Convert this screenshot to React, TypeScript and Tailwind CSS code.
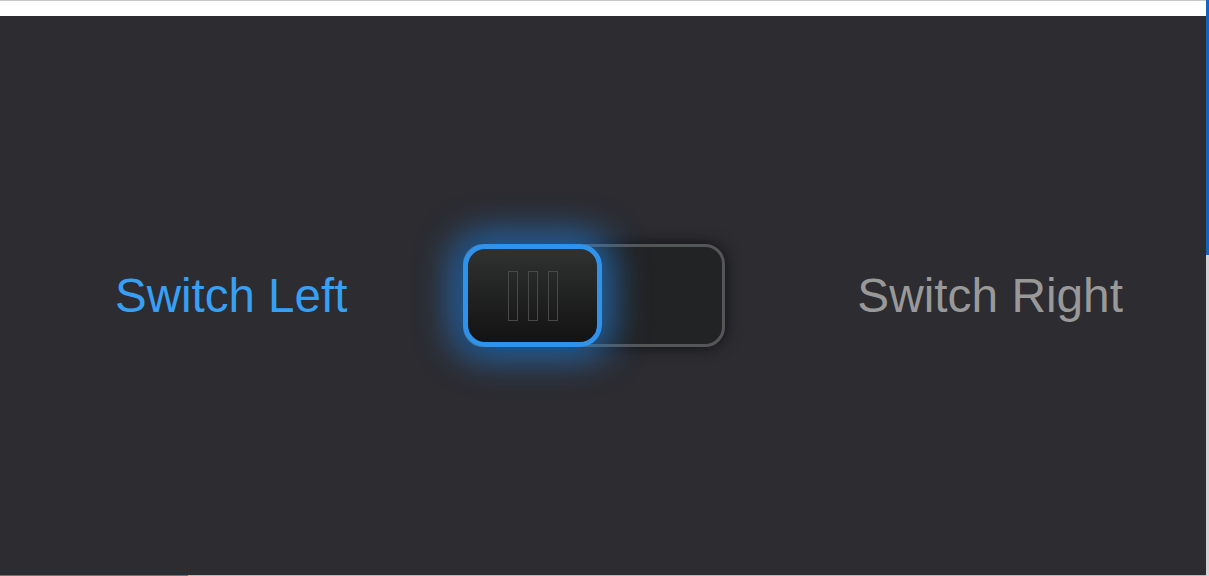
export default function App() {
  return (
    <div className="flex w-[1209px] h-[576px] overflow-hidden font-['Liberation_Sans',Arial,sans-serif]">
      <div className="flex flex-col w-[1206px] h-full">
        {/* top browser strip */}
        <div className="h-[16px] bg-white border-t border-[#c8c8c8] shrink-0" />

        <div className="flex-1 flex items-center bg-[#2c2c31]">
          <span className="ml-[115px] text-[47.5px] leading-none text-[#37a0f4] whitespace-nowrap">
            Switch Left
          </span>

          <div className="relative ml-[116px] w-[262px] h-[103px] shrink-0 rounded-[20px] border-[3px] border-[#555657] bg-[#222324] shadow-[0_0_16px_rgba(0,0,0,0.6)]">
            <div className="absolute left-[-3px] top-[-3px] w-[139px] h-[103px] rounded-[22px] border-[5px] border-[#2f93ee] bg-linear-to-b from-[#303131] to-[#131313] shadow-[0_0_34px_12px_rgba(36,140,240,0.6)] flex items-center justify-center gap-[10px]">
              <div className="w-[10px] h-[50px] border border-[#484848]" />
              <div className="w-[10px] h-[50px] border border-[#484848]" />
              <div className="w-[10px] h-[50px] border border-[#484848]" />
            </div>
          </div>

          <span className="ml-[132px] text-[47.8px] leading-none text-[#999999] whitespace-nowrap">
            Switch Right
          </span>
        </div>

        <div className="h-px flex shrink-0">
          <div className="w-[188px] bg-[#3a7fb8]" />
          <div className="flex-1 bg-[#b8b8b8]" />
        </div>
      </div>

      {/* right edge strip */}
      <div className="w-[3px] h-full flex flex-col shrink-0">
        <div className="h-[255px] bg-[#1565c0]" />
        <div className="flex-1 bg-[#d4d4d4]" />
      </div>
    </div>
  )
}
